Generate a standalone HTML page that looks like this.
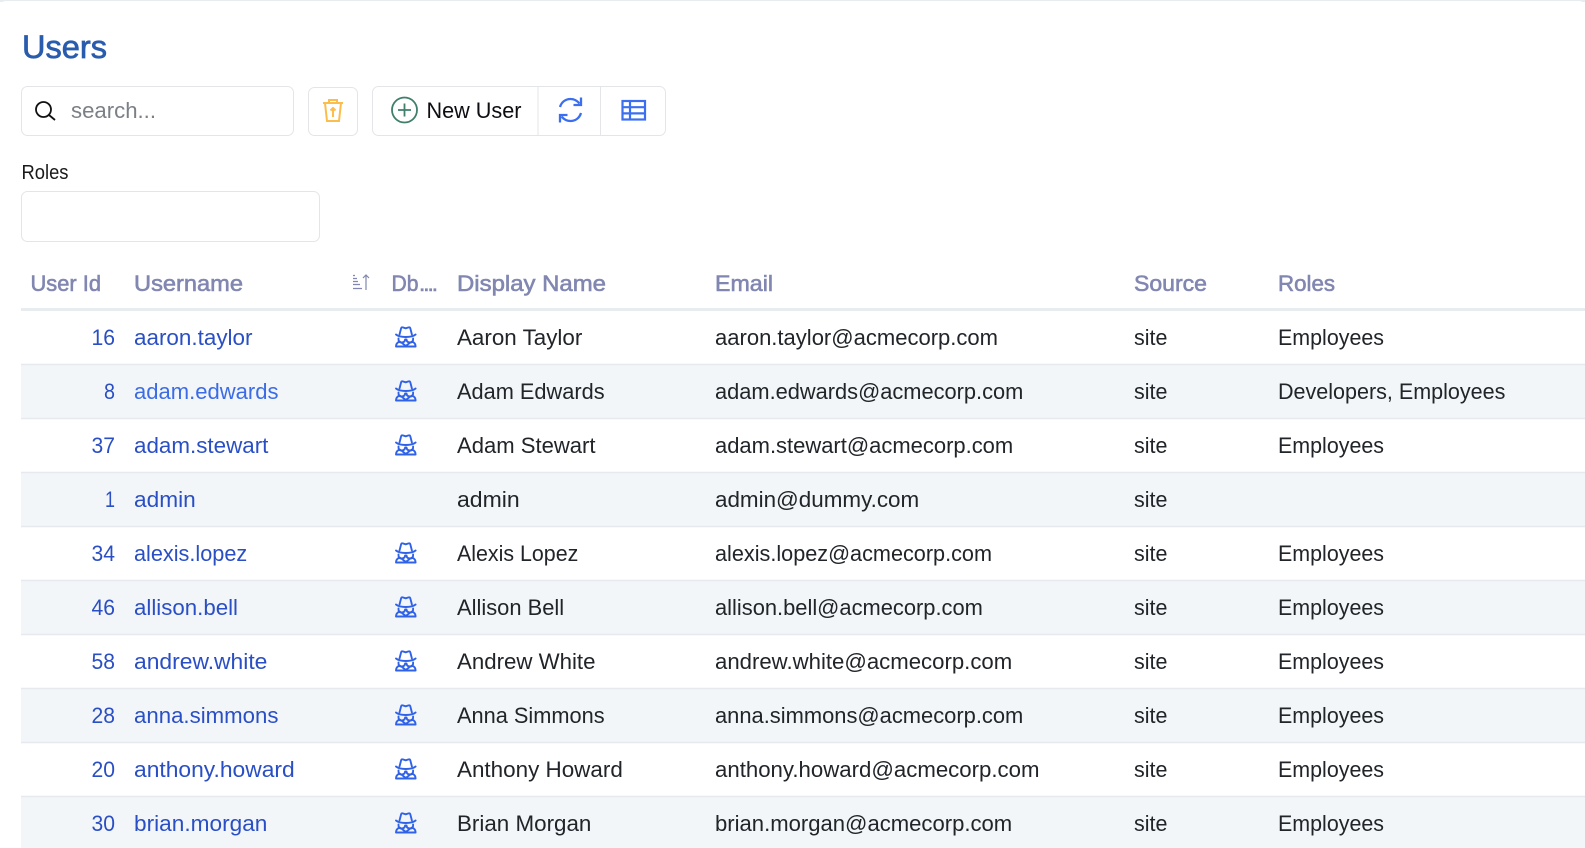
<!DOCTYPE html>
<html><head><meta charset="utf-8"><title>Users</title>
<style>
html,body{margin:0;padding:0;width:1585px;height:848px;overflow:hidden;background:#fff}
svg{display:block}
text{font-family:"Liberation Sans",sans-serif;font-size:22px;fill:#212529}
.h{fill:#8187b1;stroke:#8187b1;stroke-width:.6px;font-size:22.5px}
.l{fill:#2a4fc4}
.n{fill:#2a4fc4;text-anchor:end}
</style></head><body>
<svg width="1585" height="848" viewBox="0 0 1585 848" xmlns="http://www.w3.org/2000/svg">
<defs>
<g id="spy" fill="none" stroke="#2f62e6" stroke-width="1.900" stroke-linecap="round" stroke-linejoin="round">
<path d="M399.500 334.500l1.600-6.200q.4-1.300 1.700-.9l2.900.9 2.900-.9q1.300-.4 1.700.9l1.600 6.200"/>
<path d="M396 334.500q3 2.500 9.800 2.500t9.800-2.500"/>
<path d="M398.500 338.500q-.3 4 3 4t3.600-3h1.400q.3 3 3.600 3t3-4"/>
<path d="M396 346.500q0-3.600 3.600-5l2.400 1.500 3.800 3 3.800-3 2.400-1.500q3.600 1.400 3.600 5z"/>
</g>
</defs>
<rect width="1585" height="2" fill="#e9ecef"/>
<rect y="1" width="1585" height="847" rx="6" fill="#fff"/>

<text x="22" y="58" textLength="85" lengthAdjust="spacingAndGlyphs" style="font-size:32px;fill:#2a5cad;stroke:#2a5cad;stroke-width:.7px">Users</text>

<rect x="21.500" y="86.500" width="272" height="49" rx="6" fill="#fff" stroke="#e3e5e8"/>
<circle cx="43.500" cy="109.500" r="7.500" fill="none" stroke="#111" stroke-width="1.800"/>
<path d="M49 115l6 5" stroke="#111" stroke-width="1.800" fill="none"/>
<text x="71" y="118" textLength="85" lengthAdjust="spacingAndGlyphs" style="fill:#7b7f86">search...</text>

<rect x="308.500" y="87.500" width="49" height="48" rx="6" fill="#fff" stroke="#e3e5e8"/>
<g fill="none" stroke="#fbbd4c" stroke-width="2">
<path d="M323 103h20M329 103v-3h8v3M325 103l2 18h12l2-18"/>
<path d="M333 117v-9M330.500 110.500l2.500-2.500 2.500 2.500"/>
</g>

<rect x="372.500" y="86.500" width="293" height="49" rx="6" fill="#fff" stroke="#e3e5e8"/>
<path d="M538 87v48M600.500 87v48" stroke="#e3e5e8"/>
<circle cx="404.500" cy="110" r="12.500" fill="none" stroke="#3f7f6c" stroke-width="1.800"/>
<path d="M404.500 103.500v13M398 110h13" stroke="#3f7f6c" stroke-width="1.800"/>
<text x="426.500" y="118" textLength="95" lengthAdjust="spacingAndGlyphs" style="fill:#0d0d12;font-size:22.500px">New User</text>

<g fill="none" stroke="#3b6ff0" stroke-width="2.300">
<path d="M560 107c1.500-5 5.500-8 10.500-8 3.500 0 6.500 1.500 9 4.500"/>
<path d="M581 97.500v7.500h-7.500"/>
<path d="M581 113c-1.500 5-5.500 8-10.500 8-3.500 0-6.500-1.500-9-4.500"/>
<path d="M560 122.500v-7.500h7.500"/>
</g>
<g fill="none" stroke="#3b6ff0" stroke-width="2.200">
<rect x="622.500" y="101" width="22.500" height="18.500"/>
<path d="M622.500 107.200h22.500M622.500 113.400h22.500M630 101v18.500"/>
</g>

<text x="21.500" y="179" textLength="47" lengthAdjust="spacingAndGlyphs" style="fill:#1a1a1a;font-size:20px">Roles</text>
<rect x="21.500" y="191.500" width="298" height="50" rx="6" fill="#fff" stroke="#e3e5e8"/>

<text class="h" x="30.500" y="291" textLength="70.500" lengthAdjust="spacingAndGlyphs">User Id</text>
<text class="h" x="134" y="291" textLength="109" lengthAdjust="spacingAndGlyphs">Username</text>
<g stroke="#8187b1" fill="none" stroke-width="1.200">
<path d="M353 275.500h2M353 278.500h4M353 281.500h5M353 284.500h7M353 288.500h9"/>
<path d="M366 290v-15M363 278l3-3 3 3"/>
</g>
<text class="h" x="391.500" y="291" textLength="27" lengthAdjust="spacingAndGlyphs">Db</text>
<text class="h" x="419" y="291" textLength="19" lengthAdjust="spacing">....</text>
<text class="h" x="457" y="291" textLength="149" lengthAdjust="spacingAndGlyphs">Display Name</text>
<text class="h" x="715" y="291" textLength="58" lengthAdjust="spacingAndGlyphs">Email</text>
<text class="h" x="1134" y="291" textLength="73" lengthAdjust="spacingAndGlyphs">Source</text>
<text class="h" x="1278" y="291" textLength="57" lengthAdjust="spacingAndGlyphs">Roles</text>

<rect x="21" y="308" width="1564" height="3" fill="#e9ecef"/>
<rect x="21" y="365" width="1564" height="54" fill="#f3f6f9"/>
<rect x="21" y="473" width="1564" height="54" fill="#f3f6f9"/>
<rect x="21" y="581" width="1564" height="54" fill="#f3f6f9"/>
<rect x="21" y="689" width="1564" height="54" fill="#f3f6f9"/>
<rect x="21" y="797" width="1564" height="54" fill="#f3f6f9"/>
<path d="M21 364.500h1564M21 418.500h1564M21 472.500h1564M21 526.500h1564M21 580.500h1564M21 634.500h1564M21 688.500h1564M21 742.500h1564M21 796.500h1564" stroke="#e6e9ed" stroke-width="1.500"/>

<use href="#spy"/>
<use href="#spy" y="54"/>
<use href="#spy" y="108"/>
<use href="#spy" y="216"/>
<use href="#spy" y="270"/>
<use href="#spy" y="324"/>
<use href="#spy" y="378"/>
<use href="#spy" y="432"/>
<use href="#spy" y="486"/>

<text class="n" x="115" y="345" textLength="23.500" lengthAdjust="spacingAndGlyphs">16</text>
<text class="l" x="134" y="345" textLength="118.500" lengthAdjust="spacingAndGlyphs">aaron.taylor</text>
<text x="457" y="345" textLength="125.300" lengthAdjust="spacingAndGlyphs">Aaron Taylor</text>
<text x="715" y="345" textLength="283" lengthAdjust="spacingAndGlyphs">aaron.taylor@acmecorp.com</text>
<text x="1134" y="345" textLength="33.400" lengthAdjust="spacingAndGlyphs">site</text>
<text x="1278" y="345" textLength="106" lengthAdjust="spacingAndGlyphs">Employees</text>

<text class="n" x="115" y="399" textLength="11" lengthAdjust="spacingAndGlyphs">8</text>
<text class="l" x="134" y="399" textLength="144.500" lengthAdjust="spacingAndGlyphs" style="fill:#3b6ce6">adam.edwards</text>
<text x="457" y="399" textLength="147.600" lengthAdjust="spacingAndGlyphs">Adam Edwards</text>
<text x="715" y="399" textLength="308.300" lengthAdjust="spacingAndGlyphs">adam.edwards@acmecorp.com</text>
<text x="1134" y="399" textLength="33.400" lengthAdjust="spacingAndGlyphs">site</text>
<text x="1278" y="399" textLength="227.400" lengthAdjust="spacingAndGlyphs">Developers, Employees</text>

<text class="n" x="115" y="453" textLength="23.500" lengthAdjust="spacingAndGlyphs">37</text>
<text class="l" x="134" y="453" textLength="134.400" lengthAdjust="spacingAndGlyphs">adam.stewart</text>
<text x="457" y="453" textLength="138.500" lengthAdjust="spacingAndGlyphs">Adam Stewart</text>
<text x="715" y="453" textLength="298.200" lengthAdjust="spacingAndGlyphs">adam.stewart@acmecorp.com</text>
<text x="1134" y="453" textLength="33.400" lengthAdjust="spacingAndGlyphs">site</text>
<text x="1278" y="453" textLength="106" lengthAdjust="spacingAndGlyphs">Employees</text>

<text class="n" x="115" y="507" textLength="10" lengthAdjust="spacingAndGlyphs">1</text>
<text class="l" x="134" y="507" textLength="61.700" lengthAdjust="spacingAndGlyphs">admin</text>
<text x="457" y="507" textLength="62.700" lengthAdjust="spacingAndGlyphs">admin</text>
<text x="715" y="507" textLength="204.200" lengthAdjust="spacingAndGlyphs">admin@dummy.com</text>
<text x="1134" y="507" textLength="33.400" lengthAdjust="spacingAndGlyphs">site</text>

<text class="n" x="115" y="561" textLength="23.500" lengthAdjust="spacingAndGlyphs">34</text>
<text class="l" x="134" y="561" textLength="113.200" lengthAdjust="spacingAndGlyphs">alexis.lopez</text>
<text x="457" y="561" textLength="121.300" lengthAdjust="spacingAndGlyphs">Alexis Lopez</text>
<text x="715" y="561" textLength="277" lengthAdjust="spacingAndGlyphs">alexis.lopez@acmecorp.com</text>
<text x="1134" y="561" textLength="33.400" lengthAdjust="spacingAndGlyphs">site</text>
<text x="1278" y="561" textLength="106" lengthAdjust="spacingAndGlyphs">Employees</text>

<text class="n" x="115" y="615" textLength="23.500" lengthAdjust="spacingAndGlyphs">46</text>
<text class="l" x="134" y="615" textLength="104" lengthAdjust="spacingAndGlyphs">allison.bell</text>
<text x="457" y="615" textLength="107.100" lengthAdjust="spacingAndGlyphs">Allison Bell</text>
<text x="715" y="615" textLength="267.900" lengthAdjust="spacingAndGlyphs">allison.bell@acmecorp.com</text>
<text x="1134" y="615" textLength="33.400" lengthAdjust="spacingAndGlyphs">site</text>
<text x="1278" y="615" textLength="106" lengthAdjust="spacingAndGlyphs">Employees</text>

<text class="n" x="115" y="669" textLength="23.500" lengthAdjust="spacingAndGlyphs">58</text>
<text class="l" x="134" y="669" textLength="133.400" lengthAdjust="spacingAndGlyphs">andrew.white</text>
<text x="457" y="669" textLength="138.500" lengthAdjust="spacingAndGlyphs">Andrew White</text>
<text x="715" y="669" textLength="297.200" lengthAdjust="spacingAndGlyphs">andrew.white@acmecorp.com</text>
<text x="1134" y="669" textLength="33.400" lengthAdjust="spacingAndGlyphs">site</text>
<text x="1278" y="669" textLength="106" lengthAdjust="spacingAndGlyphs">Employees</text>

<text class="n" x="115" y="723" textLength="23.500" lengthAdjust="spacingAndGlyphs">28</text>
<text class="l" x="134" y="723" textLength="144.500" lengthAdjust="spacingAndGlyphs">anna.simmons</text>
<text x="457" y="723" textLength="147.600" lengthAdjust="spacingAndGlyphs">Anna Simmons</text>
<text x="715" y="723" textLength="308.300" lengthAdjust="spacingAndGlyphs">anna.simmons@acmecorp.com</text>
<text x="1134" y="723" textLength="33.400" lengthAdjust="spacingAndGlyphs">site</text>
<text x="1278" y="723" textLength="106" lengthAdjust="spacingAndGlyphs">Employees</text>

<text class="n" x="115" y="777" textLength="23.500" lengthAdjust="spacingAndGlyphs">20</text>
<text class="l" x="134" y="777" textLength="160.700" lengthAdjust="spacingAndGlyphs">anthony.howard</text>
<text x="457" y="777" textLength="165.800" lengthAdjust="spacingAndGlyphs">Anthony Howard</text>
<text x="715" y="777" textLength="324.500" lengthAdjust="spacingAndGlyphs">anthony.howard@acmecorp.com</text>
<text x="1134" y="777" textLength="33.400" lengthAdjust="spacingAndGlyphs">site</text>
<text x="1278" y="777" textLength="106" lengthAdjust="spacingAndGlyphs">Employees</text>

<text class="n" x="115" y="831" textLength="23.500" lengthAdjust="spacingAndGlyphs">30</text>
<text class="l" x="134" y="831" textLength="133.400" lengthAdjust="spacingAndGlyphs">brian.morgan</text>
<text x="457" y="831" textLength="134.400" lengthAdjust="spacingAndGlyphs">Brian Morgan</text>
<text x="715" y="831" textLength="297.200" lengthAdjust="spacingAndGlyphs">brian.morgan@acmecorp.com</text>
<text x="1134" y="831" textLength="33.400" lengthAdjust="spacingAndGlyphs">site</text>
<text x="1278" y="831" textLength="106" lengthAdjust="spacingAndGlyphs">Employees</text>
</svg>
</body></html>
